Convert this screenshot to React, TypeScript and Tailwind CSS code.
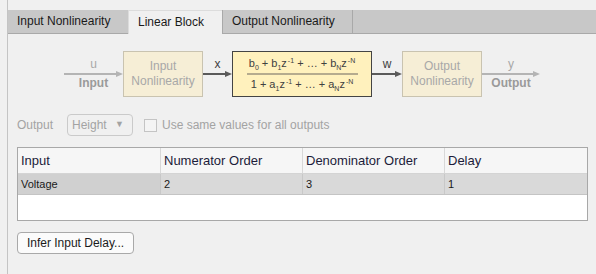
import React from "react";

const ui = { fontFamily: '"Liberation Sans", Arial, sans-serif' };

function Arrow({ width, color }: { width: number; color: string }) {
  return (
    <svg width={width} height={6} className="block">
      <line x1={0} y1={3} x2={width - 5} y2={3} stroke={color} strokeWidth={2} />
      <polygon points={`${width - 7},0 ${width},3 ${width - 7},6`} fill={color} />
    </svg>
  );
}

function Segment({
  width,
  top,
  bottom,
  dark,
}: {
  width: number;
  top: string;
  bottom?: string;
  dark?: boolean;
}) {
  const color = dark ? "#5a5a5a" : "#b4b4b4";
  return (
    <div className="flex flex-col items-center pt-[6px]" style={{ width }}>
      <span
        className={`h-[14px] leading-[14px] text-[12px] ${dark ? "text-[#404040]" : "text-[#a8a8a8]"}`}
      >
        {top}
      </span>
      <Arrow width={width} color={color} />
      {bottom && (
        <span className="h-[12px] leading-[12px] text-[12px] font-bold text-[#9a9a9a]">
          {bottom}
        </span>
      )}
    </div>
  );
}

function NonlinBox({ label }: { label: string }) {
  return (
    <div className="w-[80px] h-[46px] bg-[#f6eed6] border border-[#c9c3b0] flex flex-col items-center justify-center text-[12px] leading-[15px] text-[#a8a8a8]">
      <span>{label}</span>
      <span>Nonlinearity</span>
    </div>
  );
}

function Term({ c, s, z }: { c: string; s?: string; z?: string }) {
  return (
    <span>
      {c}
      {s && (
        <span className="inline-block leading-none text-[7px] relative top-[3px]">{s}</span>
      )}
      {z && (
        <>
          z
          <span className="inline-block leading-none text-[7px] relative top-[-4px] ml-[1px]">
            {z}
          </span>
        </>
      )}
    </span>
  );
}

function Formula() {
  return (
    <div className="w-[140px] h-[46px] bg-[#fff1bd] border border-[#444444] flex flex-col items-center justify-center text-[11px] text-[#404040] leading-[13px]">
      <div className="pb-[3px] whitespace-nowrap">
        <Term c="b" s="0" /> + <Term c="b" s="1" z="-1" /> + … + <Term c="b" s="N" z="-N" />
      </div>
      <div className="w-[111px] border-t-2 border-[#b5ab8e]" />
      <div className="pt-[3px] whitespace-nowrap">
        1 + <Term c="a" s="1" z="-1" /> + … + <Term c="a" s="N" z="-N" />
      </div>
    </div>
  );
}

const columns = ["Input", "Numerator Order", "Denominator Order", "Delay"];
const widths = ["w-[143px]", "w-[142px]", "w-[142px]", "flex-1"];
const row = ["Voltage", "2", "3", "1"];

export default function App() {
  return (
    <div className="w-[596px] h-[274px] bg-[#f0f0f0] overflow-hidden" style={ui}>
      <div className="ml-[7px] h-full border-l border-[#c4c4c4] pt-[10px]">
        {/* Tabs */}
        <div className="flex h-[24px] text-[12px] leading-[23px]">
          <div className="w-[120px] bg-[#c8c8c8] border-b border-[#a9a9a9] pl-[9px] text-[#1a1a1a]">
            Input Nonlinearity
          </div>
          <div className="w-[94px] bg-[#f0f0f0] border-t border-l border-[#dcdcdc] pl-[9px] text-[#1a1a1a]">
            Linear Block
          </div>
          <div className="w-[131px] bg-[#c8c8c8] border-b border-l border-r border-[#a9a9a9] pl-[9px] text-[#1a1a1a]">
            Output Nonlinearity
          </div>
          <div className="flex-1 bg-[#c8c8c8] border-b border-[#a9a9a9]" />
        </div>

        {/* Diagram */}
        <div className="mt-[17px] ml-[56px] flex h-[46px]">
          <Segment width={59} top="u" bottom="Input" />
          <NonlinBox label="Input" />
          <Segment width={29} top="x" dark />
          <Formula />
          <Segment width={30} top="w" dark />
          <NonlinBox label="Output" />
          <Segment width={58} top="y" bottom="Output" />
        </div>

        {/* Output selection */}
        <div className="mt-[17px] ml-[9px] flex items-center h-[22px] text-[12px] text-[#a3a3a3]">
          <span className="w-[50px]">Output</span>
          <div className="w-[66px] h-[22px] border border-[#cacaca] rounded-[4px] flex items-center justify-between pl-[4px] pr-[8px]">
            <span>Height</span>
            <span className="text-[9px]">▼</span>
          </div>
          <div className="ml-[11px] w-[13px] h-[13px] border border-[#c4c4c4] bg-[#f4f4f4]" />
          <span className="ml-[5px]">Use same values for all outputs</span>
        </div>

        {/* Table */}
        <div className="mt-[11px] ml-[9px] w-[571px] h-[74px] border border-[#a8a8a8] bg-white flex flex-col">
          <div className="flex h-[26px] bg-[#f6f6f6] border-b border-[#d4d4d4] text-[13px] text-[#1c1c3a]">
            {columns.map((c, i) => (
              <div
                key={c}
                className={`${widths[i]} flex items-center pl-[3px] ${i < 3 ? "border-r border-[#d8d8d8]" : ""}`}
              >
                {c}
              </div>
            ))}
          </div>
          <div className="flex h-[21px] bg-[#d9d9d9] border-b border-[#c4c4c4] text-[11px] text-[#1a1a1a]">
            {row.map((c, i) => (
              <div
                key={i}
                className={`${widths[i]} flex items-center pl-[3px] ${i === 0 ? "bg-[#d0d0d0]" : ""} ${i < 3 ? "border-r border-[#c8c8c8]" : ""}`}
              >
                {c}
              </div>
            ))}
          </div>
        </div>

        {/* Button */}
        <button className="mt-[11px] ml-[9px] w-[117px] h-[22px] border border-[#a9a9a9] rounded-[4px] bg-[#fbfbfb] text-[12px] text-[#1a1a1a] flex items-center justify-center">
          Infer Input Delay...
        </button>
      </div>
    </div>
  );
}
